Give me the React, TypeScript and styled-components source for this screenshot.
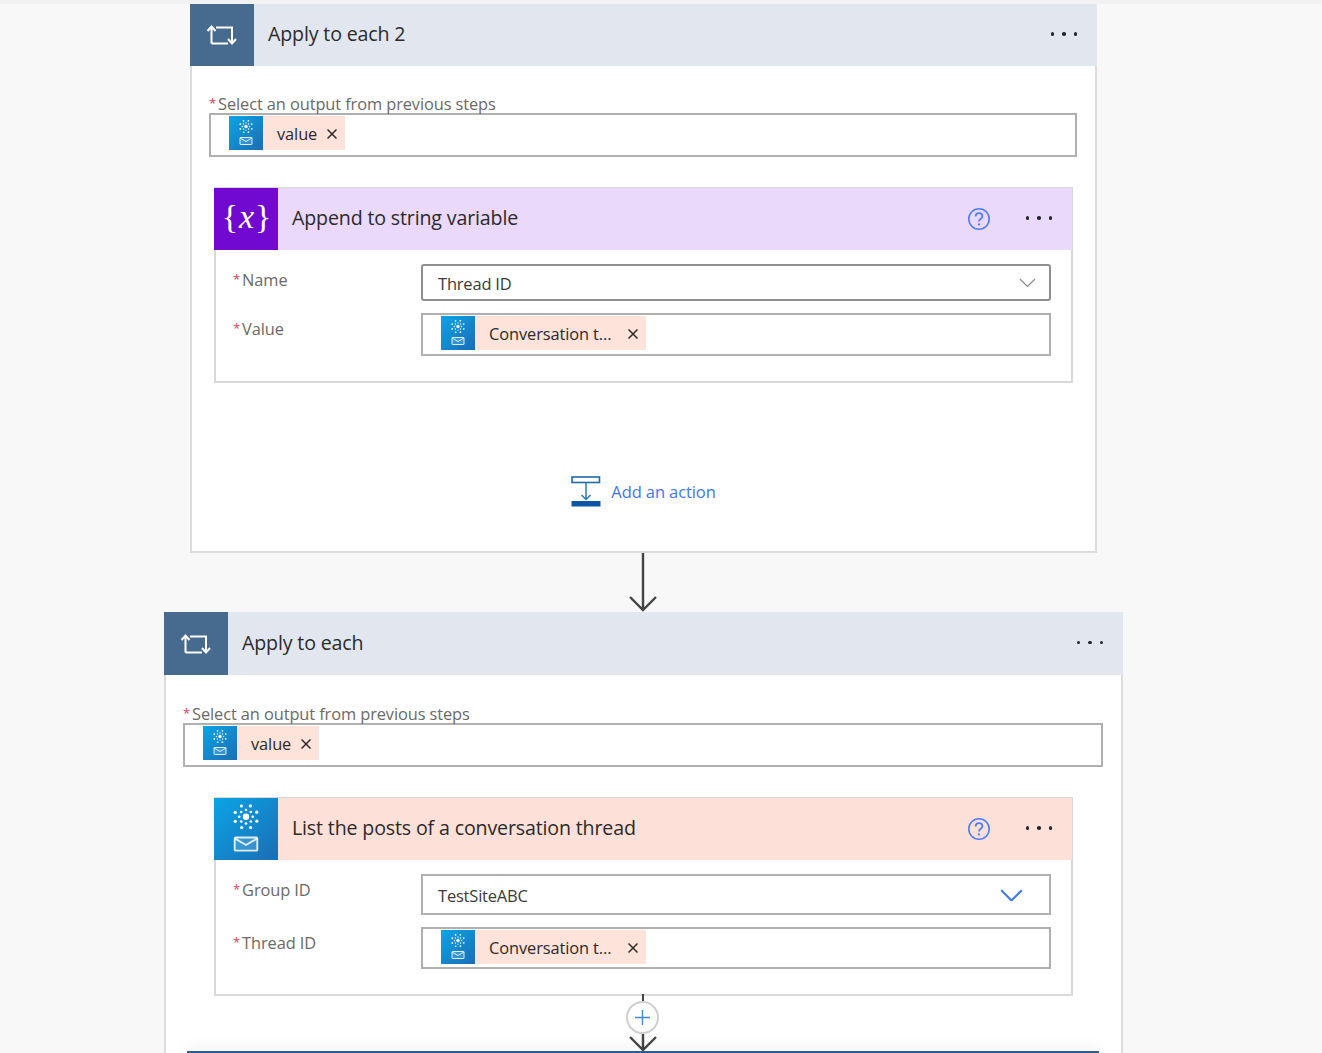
import styled, { createGlobalStyle } from 'styled-components'

const GlobalStyle = createGlobalStyle`
  html, body {
    margin: 0;
    height: 100%;
    overflow: hidden;
    background: #f8f8f8;
  }
  * {
    box-sizing: border-box;
  }
  body {
    font-family: 'Open Sans', 'Noto Sans', sans-serif;
  }
`

const TopStrip = styled.div`
  height: 4px;
  background: #f2f2f2;
`

const Canvas = styled.div`
  display: flex;
  flex-direction: column;
  align-items: center;
  padding-right: 35px;
`

const ScopeCard = styled.section<{ $width: number; $inset: number }>`
  width: ${(p) => p.$width}px;
  background: #fff;
  border: solid #dcdcdc;
  border-width: 0 2px 2px 2px;
  display: flex;
  flex-direction: column;
  align-items: center;

  & > .action-card {
    width: ${(p) => p.$width - p.$inset * 2}px;
  }
`

const ScopeHeader = styled.header<{ $height: number }>`
  align-self: stretch;
  height: ${(p) => p.$height}px;
  margin: 0 -2px 0 -2px;
  display: flex;
  align-items: center;
  background: #e2e7ef;
  color: #252423;
`

const HeaderIcon = styled.div<{ $bg: string }>`
  width: 64px;
  height: 100%;
  flex: none;
  display: flex;
  align-items: center;
  justify-content: center;
  background: ${(p) => p.$bg};
`

const VariableGlyph = styled.div`
  font-family: 'Liberation Serif', serif;
  font-size: 34px;
  line-height: 1;
  color: #fff;
  letter-spacing: -1px;
  padding-bottom: 4px;

  & > em {
    font-style: italic;
    margin: 0 2px;
  }
`

const HeaderTitle = styled.div`
  flex: 1;
  margin-left: 14px;
  padding-bottom: 3px;
  font-size: 19.6px;
  letter-spacing: -0.15px;
  color: #2b2a29;
`

const Dots = styled.div`
  display: flex;
  gap: 8px;
  margin-right: 20px;
  margin-left: 35px;
  padding-bottom: 2px;

  & > i {
    width: 3.5px;
    height: 3.5px;
    border-radius: 50%;
    background: #23262c;
  }
`

const OutputField = styled.div<{ $top: number }>`
  align-self: stretch;
  padding: ${(p) => p.$top}px 18px 0 17px;
`

const OutputLabel = styled.div`
  height: 21px;
  font-size: 16.4px;
  line-height: 23px;
  letter-spacing: -0.1px;
  color: #6b6967;
`

const Star = styled.span`
  color: #e0405a;
  font-size: 13px;
  margin-right: 2px;
  position: relative;
  top: -2px;
`

const TokenBox = styled.div<{ $height: number }>`
  flex: 1;
  height: ${(p) => p.$height}px;
  border: 2px solid #b0b0b0;
  padding: 1px 0 0 18px;
  background: #fff;
`

const Token = styled.div`
  display: inline-flex;
  align-items: center;
  height: 34px;
  background: #fde3da;
  padding-right: 8px;
  font-size: 16.4px;
  letter-spacing: -0.1px;
  color: #2b2a29;
`

const TokenIcon = styled.div`
  width: 34px;
  height: 34px;
  display: flex;
  align-items: center;
  justify-content: center;
  background: linear-gradient(135deg, #0ba5e6, #1b6db5);
  margin-right: 14px;
`

const TokenLabel = styled.span<{ $width?: number }>`
  padding-top: 1px;
  width: ${(p) => (p.$width ? `${p.$width}px` : 'auto')};
`

const TokenClose = styled.span`
  display: flex;
  margin-left: 10px;
  padding-top: 2px;
`

const ActionCard = styled.div<{ $top: number }>`
  margin-top: ${(p) => p.$top}px;
  background: #fff;
  border: 2px solid #d8d8d8;
  border-top-width: 1px;
`

const ActionHeader = styled.div<{ $bg: string }>`
  height: 62px;
  margin: 0 -1px 0 -2px;
  display: flex;
  align-items: center;
  background: ${(p) => p.$bg};
`

const HelpIcon = styled.div`
  display: flex;
`

const ActionBody = styled.div`
  display: flex;
  flex-direction: column;
  gap: 12px;
  padding: 14px 20px 25px 17px;
`

const FormRow = styled.div`
  display: flex;
`

const RowLabel = styled.div`
  width: 188px;
  flex: none;
  padding-top: 4px;
  font-size: 16.4px;
  line-height: 24px;
  letter-spacing: -0.1px;
  color: #6b6967;
`

const SelectBox = styled.div<{ $height: number; $padRight: number; $rounded?: boolean; $strong?: boolean }>`
  flex: 1;
  height: ${(p) => p.$height}px;
  display: flex;
  align-items: center;
  justify-content: space-between;
  padding: 1px ${(p) => p.$padRight}px 0 15px;
  border: 2px solid ${(p) => (p.$strong ? '#8e8e8e' : '#b0b0b0')};
  border-radius: ${(p) => (p.$rounded ? 3 : 0)}px;
  font-size: 16.5px;
  letter-spacing: -0.2px;
  color: #3b3a39;
`

const Footer = styled.div`
  display: flex;
  align-items: center;
  gap: 10px;
  margin-top: 92px;
  margin-bottom: 44px;
  height: 32px;
`

const AddLink = styled.span`
  font-size: 16.5px;
  letter-spacing: -0.1px;
  color: #3f76f2;
`

const PlusStack = styled.div`
  display: flex;
  flex-direction: column;
  align-items: center;
  margin-right: 2px;
`

const Stub = styled.div`
  width: 2px;
  height: 7px;
  background: #444;
  margin-top: -2px;
`

const PlusCircle = styled.div`
  width: 33px;
  height: 33px;
  border: 2px solid #cfcfcf;
  border-radius: 50%;
  background: #fff;
  display: flex;
  align-items: center;
  justify-content: center;
`

const NextCard = styled.div`
  width: 912px;
  height: 2px;
  background: #2f5d8a;
  box-shadow: 0 -2px 14px rgba(0, 0, 0, 0.22);
`

const LoopIcon = () => (
  <svg width="32" height="24" viewBox="0 0 32 24" fill="none" stroke="#fff" strokeWidth="2">
    <path d="M5.5 20.5V3.5M1.5 8l4-4.5 4 4.5" />
    <path d="M5.5 20.5H22" />
    <path d="M10 4.5h16v16M22 16l4 4.5 4-4.5" />
  </svg>
)

const dotAngles = [0, 45, 90, 135, 180, 225, 270, 315]

// the groups connector mark: a burst of dots above an envelope
const GroupsMailIcon = ({ size }: { size: number }) => (
  <svg width={size} height={size} viewBox="0 0 34 34" fill="none">
    <circle cx="17" cy="10.5" r="1.7" fill="#fff" />
    {dotAngles.map((a) => (
      <g key={a} fill="#fff">
        <circle cx={17 + Math.cos((a * Math.PI) / 180) * 3.6} cy={10.5 + Math.sin((a * Math.PI) / 180) * 3.6} r="0.7" />
        <circle cx={17 + Math.cos(((a + 22) * Math.PI) / 180) * 6.2} cy={10.5 + Math.sin(((a + 22) * Math.PI) / 180) * 6.2} r="0.85" />
      </g>
    ))}
    <rect x="11" y="21.5" width="12" height="7" rx="0.5" fill="#fff" fillOpacity="0.15" stroke="#fff" strokeOpacity="0.85" strokeWidth="1" />
    <path d="M11 22l6 3.5 6-3.5" stroke="#fff" strokeOpacity="0.85" strokeWidth="1" />
  </svg>
)

const CloseIcon = () => (
  <svg width="10" height="10" viewBox="0 0 10 10" stroke="#2b2a29" strokeWidth="1.5">
    <path d="M0.5 0.5l9 9M9.5 0.5l-9 9" />
  </svg>
)

const HelpCircle = () => (
  <svg width="24" height="24" viewBox="0 0 24 24" fill="none" stroke="#4f7df5">
    <circle cx="12" cy="12" r="10.2" strokeWidth="1.6" />
    <path d="M8.6 9.4c0-2 1.5-3.2 3.4-3.2s3.4 1.2 3.4 3c0 2.6-3.4 2.4-3.4 5.2" strokeWidth="1.7" />
    <circle cx="12" cy="17.4" r="1.1" fill="#4f7df5" stroke="none" />
  </svg>
)

const Chevron = ({ color, width, weight }: { color: string; width: number; weight: number }) => (
  <svg width={width} height={(width * 10) / 18} viewBox="0 0 18 10" fill="none" stroke={color} strokeWidth={weight}>
    <path d="M1 1l8 8 8-8" />
  </svg>
)

const AddActionIcon = () => (
  <svg width="30" height="31" viewBox="0 0 30 31" fill="none">
    <rect x="1" y="1" width="27.5" height="5.5" stroke="#1c6bb0" strokeWidth="1.6" fill="#fff" />
    <path d="M15 6.5v17M10.5 19l4.5 4.5 4.5-4.5" stroke="#2a78ba" strokeWidth="1.5" />
    <rect x="0.5" y="25" width="29" height="5.5" fill="#0b55a6" />
  </svg>
)

const LongArrow = () => (
  <svg width="30" height="59" viewBox="0 0 30 59" fill="none" stroke="#444" strokeWidth="2.4" style={{ display: 'block' }}>
    <path d="M14 0v57M1 44l13 13 13-13" />
  </svg>
)

const ShortArrow = () => (
  <svg width="30" height="17" viewBox="0 0 30 17" fill="none" stroke="#444" strokeWidth="2.4" style={{ display: 'block' }}>
    <path d="M15 0v15.5M2 3l13 13 13-13" />
  </svg>
)

const PlusIcon = () => (
  <svg width="15" height="15" viewBox="0 0 15 15" stroke="#4a86d8" strokeWidth="1.4">
    <path d="M7.5 0v15M0 7.5h15" />
  </svg>
)

const Required = ({ children }: { children: string }) => (
  <>
    <Star>*</Star>
    {children}
  </>
)

const ValueToken = ({ label, labelWidth }: { label: string; labelWidth?: number }) => (
  <Token>
    <TokenIcon>
      <GroupsMailIcon size={34} />
    </TokenIcon>
    <TokenLabel $width={labelWidth}>{label}</TokenLabel>
    <TokenClose>
      <CloseIcon />
    </TokenClose>
  </Token>
)

const MenuDots = () => (
  <Dots>
    <i />
    <i />
    <i />
  </Dots>
)

const App = () => (
  <>
    <GlobalStyle />
    <TopStrip />
    <Canvas>
      <ScopeCard $width={907} $inset={24}>
        <ScopeHeader $height={62}>
          <HeaderIcon $bg="#476a8f">
            <LoopIcon />
          </HeaderIcon>
          <HeaderTitle>Apply to each 2</HeaderTitle>
          <MenuDots />
        </ScopeHeader>
        <OutputField $top={26}>
          <OutputLabel>
            <Required>Select an output from previous steps</Required>
          </OutputLabel>
          <TokenBox $height={44}>
            <ValueToken label="value" />
          </TokenBox>
        </OutputField>
        <ActionCard className="action-card" $top={30}>
          <ActionHeader $bg="#ead9fb">
            <HeaderIcon $bg="#7209d0">
              <VariableGlyph>
                {'{'}
                <em>x</em>
                {'}'}
              </VariableGlyph>
            </HeaderIcon>
            <HeaderTitle>Append to string variable</HeaderTitle>
            <HelpIcon>
              <HelpCircle />
            </HelpIcon>
            <MenuDots />
          </ActionHeader>
          <ActionBody>
            <FormRow>
              <RowLabel>
                <Required>Name</Required>
              </RowLabel>
              <SelectBox $height={37} $padRight={13} $rounded $strong>
                Thread ID
                <Chevron color="#8a8a8a" width={17} weight={1.3} />
              </SelectBox>
            </FormRow>
            <FormRow>
              <RowLabel>
                <Required>Value</Required>
              </RowLabel>
              <TokenBox $height={43}>
                <ValueToken label="Conversation t..." labelWidth={129} />
              </TokenBox>
            </FormRow>
          </ActionBody>
        </ActionCard>
        <Footer>
          <AddActionIcon />
          <AddLink>Add an action</AddLink>
        </Footer>
      </ScopeCard>
      <LongArrow />
      <ScopeCard $width={959} $inset={50}>
        <ScopeHeader $height={63}>
          <HeaderIcon $bg="#476a8f">
            <LoopIcon />
          </HeaderIcon>
          <HeaderTitle>Apply to each</HeaderTitle>
          <MenuDots />
        </ScopeHeader>
        <OutputField $top={27}>
          <OutputLabel>
            <Required>Select an output from previous steps</Required>
          </OutputLabel>
          <TokenBox $height={44}>
            <ValueToken label="value" />
          </TokenBox>
        </OutputField>
        <ActionCard className="action-card" $top={30}>
          <ActionHeader $bg="#fde1d9">
            <HeaderIcon $bg="linear-gradient(135deg, #0ba5e6, #1b6db5)">
              <GroupsMailIcon size={64} />
            </HeaderIcon>
            <HeaderTitle>List the posts of a conversation thread</HeaderTitle>
            <HelpIcon>
              <HelpCircle />
            </HelpIcon>
            <MenuDots />
          </ActionHeader>
          <ActionBody>
            <FormRow>
              <RowLabel>
                <Required>Group ID</Required>
              </RowLabel>
              <SelectBox $height={41} $padRight={26}>
                TestSiteABC
                <Chevron color="#3f76f2" width={23} weight={1.6} />
              </SelectBox>
            </FormRow>
            <FormRow>
              <RowLabel>
                <Required>Thread ID</Required>
              </RowLabel>
              <TokenBox $height={42}>
                <ValueToken label="Conversation t..." labelWidth={129} />
              </TokenBox>
            </FormRow>
          </ActionBody>
        </ActionCard>
        <PlusStack>
          <Stub />
          <PlusCircle>
            <PlusIcon />
          </PlusCircle>
          <ShortArrow />
          <NextCard />
        </PlusStack>
      </ScopeCard>
    </Canvas>
  </>
)

export default App
